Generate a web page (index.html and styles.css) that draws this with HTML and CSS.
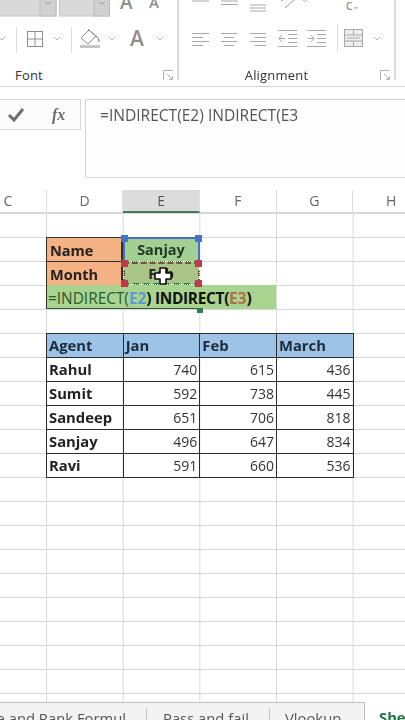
FILE: index.html
```html
<!DOCTYPE html>
<html lang="en">
<head>
<meta charset="utf-8">
<title>Excel INDIRECT</title>
<link rel="stylesheet" href="styles.css">
</head>
<body>
<div class="app">
  <section class="ribbon">
    <div class="group group-font">
      <svg class="tools" width="178" height="66" viewBox="0 0 178 66" fill="none" stroke="#a8a8a8">
        <rect x="-2" y="-2" width="59" height="18" fill="#d9d9d9" stroke="#c4c4c4"/>
        <rect x="41" y="-2" width="16" height="18" fill="#d0d0d0" stroke="#bdbdbd"/>
        <rect x="60.500" y="-2" width="50" height="18" fill="#d9d9d9" stroke="#c4c4c4"/>
        <rect x="95" y="-2" width="15.500" height="18" fill="#d0d0d0" stroke="#bdbdbd"/>
        <path d="M46 2l3 2 3-2M100 2l3 2 3-2" stroke="#9a9a9a"/>
        <text x="121" y="9" class="tool-a" font-size="19">A</text>
        <text x="150" y="8" class="tool-a" font-size="15">A</text>
        <path d="M0 37l3 3 3-3M55 37l3 3 3-3M110 37l3 3 3-3M158 37l3 3 3-3" stroke="#b4b4b4"/>
        <path d="M17.500 27v26M72.500 27v26" stroke="#dcdcdc"/>
        <rect x="28.500" y="31.500" width="15" height="15" stroke="#8e8e8e"/>
        <path d="M36 31.500v15M28.500 39h15" stroke="#8e8e8e"/>
        <path d="M90 30l-8 8 7 6 8-8zM89 29l6 6" stroke="#888"/>
        <path d="M97 36c3 2 3 5 3 6" stroke="#555"/>
        <rect x="81" y="45" width="20" height="3" fill="#c6c6c6" stroke="none"/>
        <text x="131" y="46" class="tool-a" font-size="21">A</text>
      </svg>
      <div class="foot">
        <span class="group-name">Font</span>
        <svg class="launcher" width="11" height="11" viewBox="0 0 11 11" fill="none" stroke="#b2b2b2"><path d="M.500 10V.500H10M4 4l5 5M6 9.500h3.500V6"/></svg>
      </div>
    </div>
    <div class="group group-align">
      <svg class="tools" width="216" height="66" viewBox="179 0 216 66" fill="none" stroke="#a8a8a8">
        <path d="M193 1h17M222 1h17M222 4.500h17M251 5h16M251 8h16M251 11h16"/>
        <path d="M282 1l12-7M286 8l10-9" stroke="#999"/>
        <path d="M304 0l2 2 2-2" stroke="#bbb"/>
        <path d="M338.500 24v28" stroke="#dcdcdc"/>
        <text x="347" y="10" class="tool-a" font-size="10">C</text>
        <path d="M358 7v1h-3" stroke="#999"/>
        <path d="M193 33.500h17M193 37.500h11M193 41.500h17M193 45.500h11"/>
        <path d="M222 33.500h16M225 37.500h10M222 41.500h16M225 45.500h10"/>
        <path d="M251 33.500h16M256 37.500h11M251 41.500h16M256 45.500h11"/>
        <path d="M279 30.500h19M289 34.500h9M289 38.500h9M289 42.500h9M279 46.500h19M286 38.500h-6M283 35l-3 3.500 3 3.500" />
        <path d="M308 30.500h19M318 34.500h9M318 38.500h9M318 42.500h9M308 46.500h19M309 38.500h6M312 35l3 3.500-3 3.500" />
        <rect x="345.500" y="29.500" width="18" height="17" fill="#eeeeee"/>
        <path d="M345.500 35h18M345.500 41h18M354.500 29.500v5.500M354.500 41v5.500M348 38h13" />
        <path d="M375 37l3 3 3-3" stroke="#b4b4b4"/>
      </svg>
      <div class="foot">
        <span class="group-name">Alignment</span>
        <svg class="launcher" width="11" height="11" viewBox="0 0 11 11" fill="none" stroke="#b2b2b2"><path d="M.500 10V.500H10M4 4l5 5M6 9.500h3.500V6"/></svg>
      </div>
    </div>
  </section>

  <section class="formula-bar">
    <div class="fx-box">
      <svg class="check" width="18" height="15" viewBox="0 0 18 15" fill="none" stroke="#6f6f6f" stroke-width="3"><path d="M2 8l5 5 9-11"/></svg>
      <span class="fx">fx</span>
    </div>
    <div class="formula-input">=INDIRECT(E2) INDIRECT(E3</div>
  </section>

  <div class="col-heads">
    <span class="col-head">C</span>
    <span class="col-head">D</span>
    <span class="col-head active">E</span>
    <span class="col-head">F</span>
    <span class="col-head">G</span>
    <span class="col-head">H</span>
  </div>

  <section class="sheet">
    <div class="mini">
      <div class="cell label">Name</div>
      <div class="cell value-name">Sanjay</div>
      <div class="spacer"></div>
      <div class="cell label">Month</div>
      <div class="cell value-month">Feb</div>
      <div class="spacer"></div>
      <div class="cell formula-cell">=INDIRECT(<span class="ref-blue">E2</span><b>) INDIRECT(</b><span class="ref-red">E3</span><b>)</b></div>

      <div class="range-blue">
        <i class="handle blue tl"></i><i class="handle blue tr"></i>
      </div>
      <div class="range-red">
        <i class="handle red tl"></i><i class="handle red tr"></i><i class="handle red bl"></i><i class="handle red br"></i>
      </div>
      <i class="fill-handle"></i>
      <svg class="cursor" width="18" height="18" viewBox="0 0 18 18"><path d="M6 1h6v5h5v6h-5v5H6v-5H1V6h5z" fill="#fff" stroke="#111" stroke-width="1.600" stroke-linejoin="round"/></svg>
    </div>

    <table class="agents">
      <tr class="head"><th>Agent</th><th>Jan</th><th>Feb</th><th>March</th></tr>
      <tr><th>Rahul</th><td>740</td><td>615</td><td>436</td></tr>
      <tr><th>Sumit</th><td>592</td><td>738</td><td>445</td></tr>
      <tr><th>Sandeep</th><td>651</td><td>706</td><td>818</td></tr>
      <tr><th>Sanjay</th><td>496</td><td>647</td><td>834</td></tr>
      <tr><th>Ravi</th><td>591</td><td>660</td><td>536</td></tr>
    </table>
  </section>

  <footer class="tabs">
    <div class="tab-strip">
      <span class="tab tab-clip"><span>Percentage and Rank Formul</span></span>
      <span class="tab tab-pass">Pass and fail</span>
      <span class="tab tab-vlookup">Vlookup</span>
    </div>
    <span class="tab-active">Sheet1</span>
  </footer>
</div>
</body>
</html>
```
FILE: styles.css
```css
* { box-sizing: border-box; }
html, body { margin: 0; padding: 0; background: #fff; }
body { font-family: "Open Sans", "Liberation Sans", sans-serif; color: #222; }
.app { width: 405px; height: 720px; overflow: hidden; display: flex; flex-direction: column; filter: blur(0.35px); }

.ribbon { height: 87px; flex: none; display: flex; background: #fff; border-bottom: 1px solid #d6d6d6; padding-bottom: 6px; }
.group { display: flex; flex-direction: column; align-items: flex-end; border-right: 2px solid #dcdcdc; }
.group-font { width: 179px; flex: none; }
.group-align { width: 217px; flex: none; }
.tools { display: block; flex: none; overflow: visible; }
.tool-a { fill: #8e8e8e; stroke: none; font-family: "Open Sans", sans-serif; font-weight: 600; }
.foot { position: relative; height: 14px; align-self: stretch; font-size: 13px; line-height: 18px; color: #333; text-align: center; }
.group-font .foot { text-align: left; padding-left: 15px; }
.group-align .foot { padding-right: 20px; }
.group-name { display: inline-block; letter-spacing: 0.2px; }
.launcher { position: absolute; right: 3px; top: 4px; }

.formula-bar { height: 103px; flex: none; display: flex; align-items: flex-start; gap: 4px; padding-top: 12px; background: #fff; }
.fx-box { width: 81px; height: 31px; border: 1px solid #d6d6d6; border-left: 0; display: flex; align-items: center; padding-left: 7px; gap: 27px; background: #fcfcfc; }
.fx { font-family: "Liberation Serif", serif; font-style: italic; font-weight: 700; font-size: 16px; color: #6a6a6a; }
.formula-input { flex: 1; height: 79px; border: 1px solid #d6d6d6; border-right: 0; padding: 5px 0 0 14px; font-size: 15.550px; line-height: 20px; color: #555; background: #fdfdfd; }

.col-heads { height: 23px; flex: none; margin-left: -30px; display: grid; grid-template-columns: repeat(6, 76.670px); border-bottom: 1px solid #d4d4d4; margin-right: -100px; }
.col-head { text-align: center; font-size: 14px; line-height: 22px; color: #666; border-right: 1px solid #dedede; }
.col-head.active { background: #dcdcdc; border-bottom: 2px solid #3f7f55; height: 23px; color: #555; }

.sheet {
  flex: 1; position: relative; padding: 24px 0 0 46px; overflow: hidden;
  background-color: #fff;
  background-image:
    linear-gradient(to right, #d9d9d9 1px, transparent 1px),
    linear-gradient(to bottom, #d9d9d9 1px, transparent 1px);
  background-size: 76.670px 24px;
  background-position: 46px 0;
}

.mini { position: relative; display: grid; grid-template-columns: repeat(3, 76.670px); grid-auto-rows: 24px; font-size: 14.500px; font-weight: 700; margin-bottom: 24px; width: 230px; }
.spacer { grid-column: 3; }
.cell { line-height: 26px; padding: 0 3px; white-space: nowrap; }
.label { background: #f4b183; border: 1px solid #33302a; border-right: 2px solid #33302a; border-bottom: 0; color: #222; }
.value-name { background: #a3cf92; text-align: center; color: #1d3a26; }
.value-month { background: #a9c688; text-align: center; color: #222; }
.formula-cell { position: relative; grid-column: 1 / 4; background: #a9d48f; color: #2c5a30; font-weight: 400; padding: 0 0 0 1px; font-size: 15.400px; line-height: 27px; border-left: 1px solid #33302a; }
.formula-cell::after { content: ""; position: absolute; left: -1px; bottom: 0; width: 154px; height: 1px; background: #2f5b3a; }
.formula-cell b { color: #111; font-weight: 700; letter-spacing: -0.300px; }
.ref-blue { color: #5b9bd5; font-weight: 700; }
.ref-red { color: #b0714a; font-weight: 700; }

.range-blue { position: absolute; left: 77px; top: 0; width: 77px; height: 24px; border: 2px solid #4472c4; border-bottom: 0; }
.range-red { position: absolute; left: 77px; top: 24px; width: 77px; height: 24px; border: 2px dashed #6b5a45; border-top-width: 3px; border-bottom-color: #2f7d4f; outline: 1px dotted #fff; outline-offset: -1px; }
.handle { position: absolute; width: 7px; height: 7px; }
.handle.blue { background: #4472c4; }
.handle.red { background: #c0394e; }
.tl { left: -4px; top: -4px; }
.tr { right: -4px; top: -4px; }
.bl { left: -4px; bottom: -4px; }
.br { right: -4px; bottom: -4px; }
.fill-handle { position: absolute; left: 151px; top: 71px; width: 6px; height: 5px; background: #2f7d4f; }
.cursor { position: absolute; left: 108px; top: 30px; }

.agents { border-collapse: collapse; table-layout: fixed; width: 307px; font-size: 14px; }
.agents th, .agents td { width: 76.670px; height: 24px; border: 1px solid #2c2c2c; padding: 0 2px 0 2px; line-height: 20px; color: #222; }
.agents th { text-align: left; font-weight: 700; font-size: 14.800px; padding-bottom: 2px; }
.agents td { text-align: right; color: #333; }
.head th { background: #9dc3e6; color: #1d2a3a; }

.tabs { height: 18px; flex: none; display: flex; align-items: flex-start; overflow: hidden; font-size: 14.800px; line-height: 20px; background: #fff; }
.tab-strip { width: 365px; flex: none; height: 18px; display: flex; background: #f3f3f3; border-top: 1px solid #bdbdbd; border-right: 1px solid #bdbdbd; padding-top: 5px; color: #555; }
.tab { display: block; white-space: nowrap; height: 16px; }
.tab-clip { width: 147px; direction: rtl; overflow: hidden; border-right: 1px solid #c4c4c4; padding-right: 20px; text-align: right; }
.tab-clip span { direction: ltr; unicode-bidi: bidi-override; }
.tab-pass { width: 123px; padding-left: 16px; border-right: 1px solid #c4c4c4; }
.tab-vlookup { padding-left: 15px; }
.tab-active { margin: 5px 0 0 14px; font-weight: 700; color: #217346; }
```
